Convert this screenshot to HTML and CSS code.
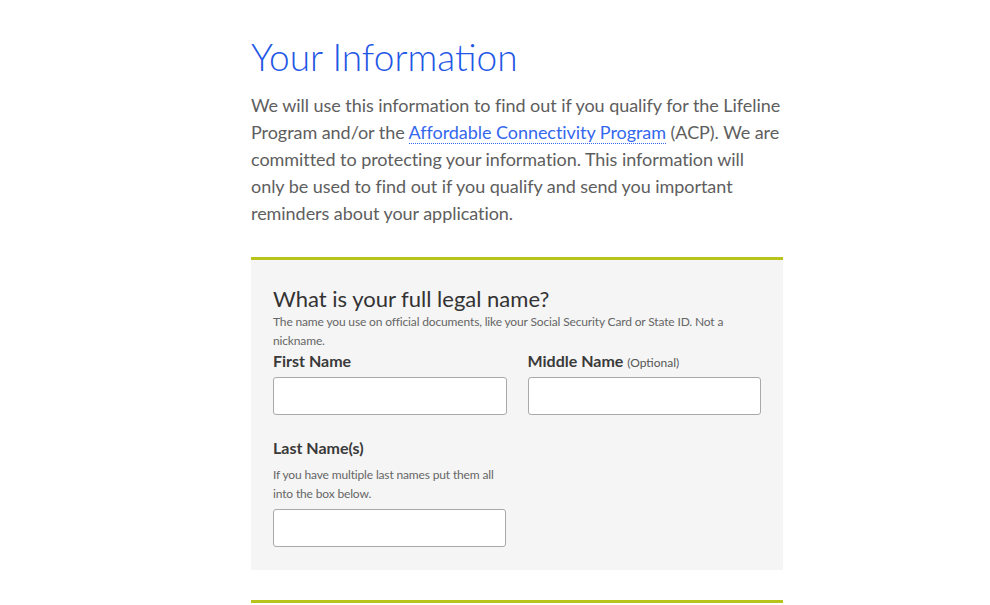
FILE: index.html
```html
<!DOCTYPE html>
<html lang="en">
<head>
  <meta charset="UTF-8">
  <meta name="viewport" content="width=device-width, initial-scale=1.0">
  <title>Your Information</title>
  <link rel="stylesheet" href="styles.css">
</head>
<body>
  <main class="page">
    <h1>Your Information</h1>
    <p class="intro">
      We will use this information to find out if you qualify for the Lifeline
      Program and/or the <a href="#">Affordable Connectivity Program</a> (ACP). We are
      committed to protecting your information. This information will<br>
      only be used to find out if you qualify and send you important
      reminders about your application.
    </p>

    <section class="card">
      <h2>What is your full legal name?</h2>
      <p class="hint">The name you use on official documents, like your Social Security Card or State ID. Not a nickname.</p>
      <div class="row">
        <div class="field">
          <label for="first">First Name</label>
          <input id="first" type="text">
        </div>
        <div class="field">
          <label for="middle">Middle Name <span class="optional">(Optional)</span></label>
          <input id="middle" type="text">
        </div>
      </div>
      <div class="row">
        <div class="field last">
          <label for="last">Last Name(s)</label>
          <p class="hint">If you have multiple last names put them all into the box below.</p>
          <input id="last" type="text">
        </div>
      </div>
    </section>

    <div class="divider"></div>
  </main>
</body>
</html>
```

FILE: styles.css
```css
body {
  margin: 0;
  font-family: Lato, "Open Sans", sans-serif;
  background: #fff;
  color: #5c5c5c;
}

.page {
  width: 532px;
  margin: 0 0 0 251px;
  padding-top: 34px;
}

h1 {
  margin: 0;
  font-size: 37px;
  font-weight: 300;
  color: #1f57e6;
  line-height: 46px;
}

.intro {
  margin: 12px 0 0;
  font-size: 18px;
  letter-spacing: -0.05px;
  line-height: 27px;
  color: #5e5e5e;
}

.intro a {
  color: #3468ee;
  text-decoration: none;
  border-bottom: 1px dotted #3468ee;
}

.card {
  margin-top: 30px;
  border-top: 3px solid #b8c41c;
  background: #f5f5f5;
  padding: 26px 22px 23px;
}

h2 {
  margin: 0;
  font-size: 22px;
  font-weight: 400;
  color: #333;
  line-height: 26px;
}

.hint {
  margin: 0;
  font-size: 12px;
  letter-spacing: -0.15px;
  line-height: 19px;
  color: #666;
}

.row {
  display: flex;
  gap: 21px;
}

.row + .row {
  margin-top: 22px;
}

.field {
  flex: 1;
  display: flex;
  flex-direction: column;
}

.field label {
  display: block;
  height: 22px;
  font-size: 16px;
  font-weight: 700;
  color: #3a3a3a;
  line-height: 22px;
  margin-bottom: 5px;
}

.field .optional {
  font-size: 12px;
  font-weight: 400;
  color: #555;
}

.field.last .hint {
  margin-top: 1px;
  margin-bottom: 6px;
}

.field input {
  height: 38px;
  box-sizing: border-box;
  border: 1px solid #a9a9a9;
  border-radius: 3px;
  background: #fff;
  font: inherit;
}

.field.last {
  flex: 0 0 233px;
}

.divider {
  margin-top: 30px;
  border-top: 3px solid #b8c41c;
}
```
